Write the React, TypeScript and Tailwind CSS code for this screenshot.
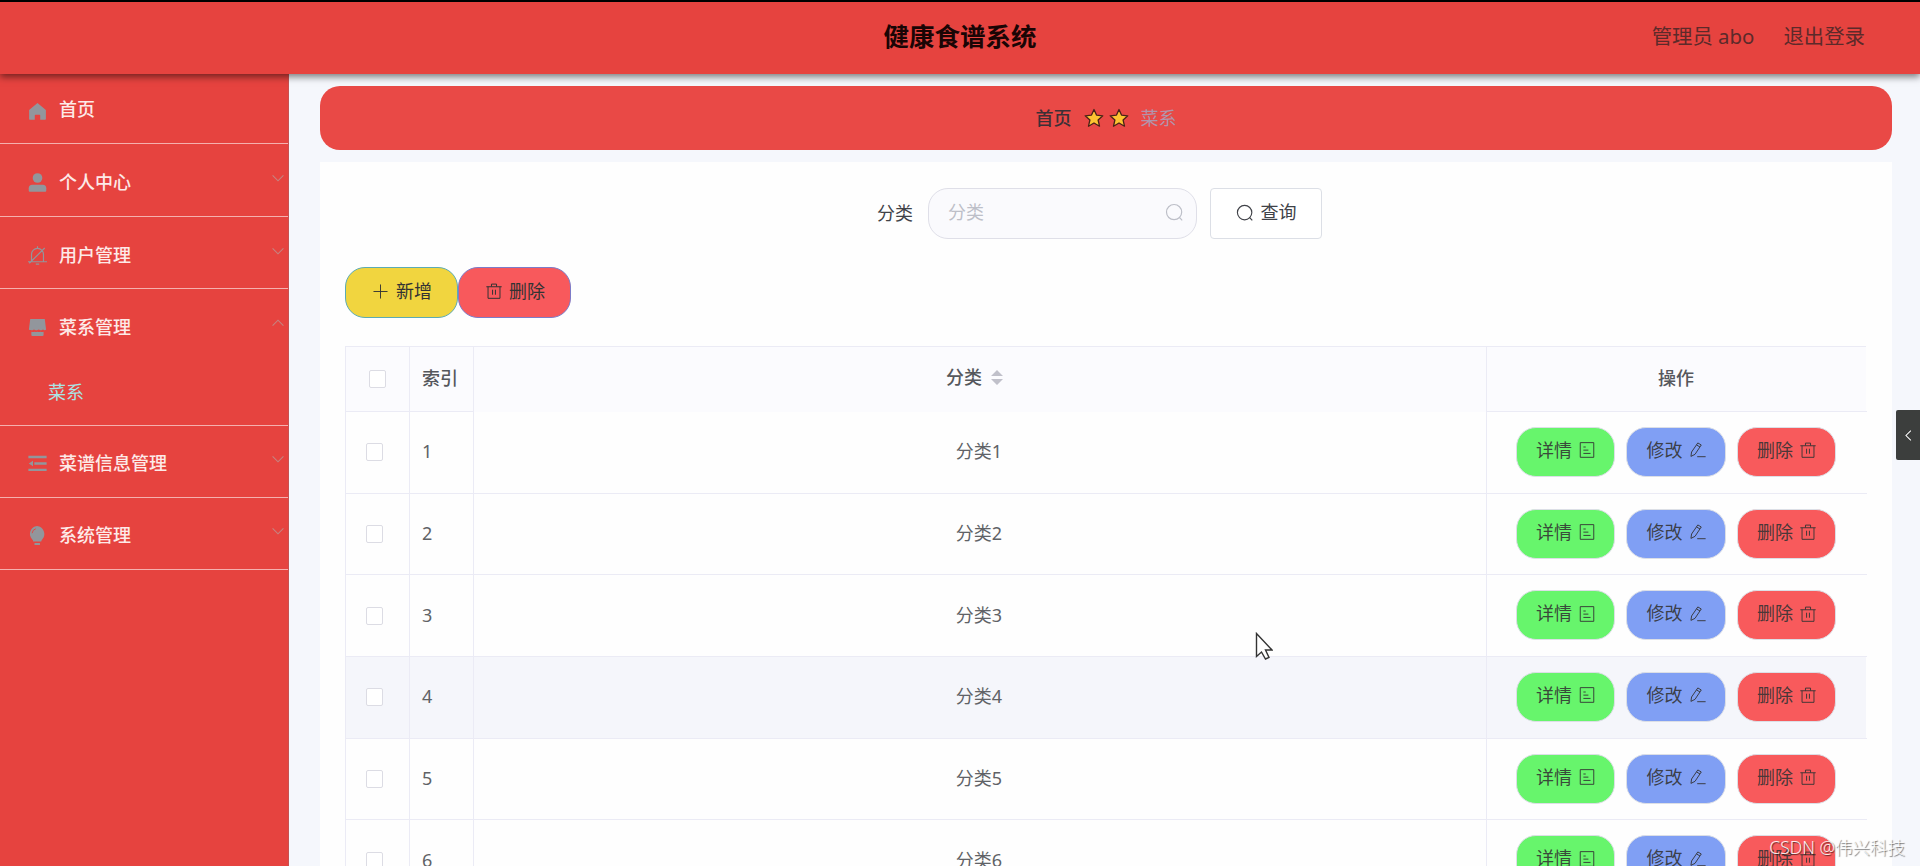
import type { ReactNode, SVGProps } from 'react'

type IconProps = SVGProps<SVGSVGElement>

function Icon({ children, ...rest }: IconProps) {
  return (
    <svg viewBox="0 0 1024 1024" fill="currentColor" aria-hidden="true" {...rest}>
      {children}
    </svg>
  )
}

/** Contour icons share one thin stroke on the same 1024 grid. */
function LineIcon({ children, ...rest }: IconProps) {
  return (
    <Icon fill="none" stroke="currentColor" strokeWidth={64} {...rest}>
      {children}
    </Icon>
  )
}

const HomeIcon = (p: IconProps) => (
  <Icon {...p}>
    <path d="M512 60 60 430v490q0 40 40 40h266V730q0-40 40-40h212q40 0 40 40v230h266q40 0 40-40V430z" />
  </Icon>
)

const UserIcon = (p: IconProps) => (
  <Icon {...p}>
    <circle cx="512" cy="270" r="260" />
    <path d="M230 630h564q190 0 190 190v130q0 54-54 54H94q-54 0-54-54V820q0-190 190-190z" />
  </Icon>
)

const BellOffIcon = (p: IconProps) => (
  <LineIcon {...p}>
    <path d="M0 850h1024M190 850V450a322 322 0 0 1 644 0v400M512 20v108M420 980h184M70 930 900 110" />
  </LineIcon>
)

const StorageIcon = (p: IconProps) => (
  <Icon {...p}>
    <path d="M120 50h784l70 570q-40 60-110 20-60-40-110 0-60 40-110 0-60-40-132 0-60 40-132 0-60-40-110 0-60 40-110 0-60 30-110-20z" />
    <path d="M180 740q90 40 170 0 80 40 160 0 80 40 160 0 80 40 170 0v170q0 60-60 60H240q-60 0-60-60z" />
  </Icon>
)

const FoldIcon = (p: IconProps) => (
  <Icon {...p}>
    <path d="M20 100h984v130H20zM340 445h664v130H340zM20 790h984v130H20zM270 360v304L40 512z" />
  </Icon>
)

const BulbIcon = (p: IconProps) => (
  <Icon {...p}>
    <path d="M280 840q0-60-60-120A430 430 0 0 1 492 0a430 430 0 0 1 290 700q-70 80-70 140zM350 920h294v104H350z" />
    <path d="M220 390q20-190 200-240" fill="none" stroke="#e6433f" strokeWidth={50} />
  </Icon>
)

const SearchIcon = (p: IconProps) => (
  <LineIcon {...p}>
    <circle cx="490" cy="490" r="410" />
    <path d="m765 765 160 170" />
  </LineIcon>
)

const PlusIcon = (p: IconProps) => (
  <LineIcon {...p}>
    <path d="M512 32v960M32 512h960" />
  </LineIcon>
)

const TrashIcon = (p: IconProps) => (
  <LineIcon {...p}>
    <path d="M20 240h984M130 240v740h764V240M350 230V70h324v160M420 430v320M604 430v320" />
  </LineIcon>
)

const DocIcon = (p: IconProps) => (
  <LineIcon {...p}>
    <path d="M80 40h864v940H80zM280 320h150M280 520h320M280 730h460" />
  </LineIcon>
)

const EditIcon = (p: IconProps) => (
  <LineIcon {...p}>
    <path d="M60 920 100 640 500 60l220 130-400 600zM420 190l220 130M460 940h540" />
  </LineIcon>
)

const Chevron = (p: IconProps) => (
  <LineIcon strokeWidth={96} {...p}>
    <path d="m50 290 462 460 462-460" />
  </LineIcon>
)

const Star = () => (
  <svg viewBox="0 0 20 20" className="h-5 w-5" aria-hidden="true">
    <path
      d="m10 1.5 2.500 5.600 6.300.7-4.700 4.200 1.400 6.200L10 15l-5.500 3.200 1.400-6.200-4.700-4.200 6.300-.7z"
      fill="#fdc431"
      stroke="#4a2218"
      strokeWidth="1.300"
      strokeLinejoin="round"
    />
  </svg>
)

type MenuItem = {
  label: string
  Icon: (p: IconProps) => ReactNode
  size: string
  child?: string
  leaf?: boolean
}

const MENU: MenuItem[] = [
  { label: '首页', Icon: HomeIcon, size: 'h-[70px] pb-[11px]', leaf: true },
  { label: '个人中心', Icon: UserIcon, size: 'h-[73px] pt-px' },
  { label: '用户管理', Icon: BellOffIcon, size: 'h-[72px] pt-px' },
  { label: '菜系管理', Icon: StorageIcon, size: 'h-[137px] pt-px', child: '菜系' },
  { label: '菜谱信息管理', Icon: FoldIcon, size: 'h-[72px]' },
  { label: '系统管理', Icon: BulbIcon, size: 'h-[72px]' },
]

const ROWS = [1, 2, 3, 4, 5, 6]
const HOVERED = 4

const COLS = 'grid grid-cols-[64px_64px_1013px_380px]'

function Sidebar() {
  return (
    <aside className="w-[289px] shrink-0 border-r border-[#c75150] bg-[#e6433f]">
      {MENU.map(({ label, Icon: Glyph, size, child, leaf }) => (
        <div key={label} className={`border-b border-[#f5b0ae] ${size}`}>
          <div className={`flex items-center pl-7 pr-1 ${leaf ? 'h-[70px]' : 'h-[75px]'}`}>
            <Glyph className={`h-[19px] w-[19px] shrink-0 text-[#92969c] ${leaf ? 'mt-1' : ''}`} />
            <span className="ml-3 flex-1 text-[18px] font-medium text-[#fdeae8]">{label}</span>
            {leaf ? null : (
              <Chevron className={`mb-[9px] h-3 w-3 text-[#c58380] ${child ? 'rotate-180' : ''}`} />
            )}
          </div>
          {child ? <div className="pl-12 pt-[13px] text-[18px] leading-7 text-[#a9e5e6]">{child}</div> : null}
        </div>
      ))}
    </aside>
  )
}

function Checkbox() {
  return <span className="h-[18px] w-[17px] rounded-[2px] border border-[#dcdce4] bg-white" />
}

function ActionButton({ label, tone, children }: { label: string; tone: string; children: ReactNode }) {
  return (
    <button
      type="button"
      className={`flex h-[50px] items-center justify-center gap-[7px] rounded-[20px] border border-[#dcdfe6] pb-[3px] text-[18px] text-[#333]/90 ${tone}`}
    >
      {label}
      {children}
    </button>
  )
}

function Row({ n }: { n: number }) {
  return (
    <div className={`${COLS} h-[81.700px] text-[18px] text-[#606266] ${n === HOVERED ? 'bg-[#f5f6fb]' : ''}`}>
      <div className="flex items-center border-b border-r border-[#ebebf5] pl-5">
        <Checkbox />
      </div>
      <div className="flex items-center border-b border-r border-[#ebebf5] pb-px pl-3">{n}</div>
      <div className="flex items-center justify-center border-b border-r border-[#ebebf5] pb-px pr-[2px]">
        分类{n}
      </div>
      <div className="flex items-center gap-[11px] border-b border-[#ebebf5] pb-px pl-[29px]">
        <ActionButton label="详情" tone="w-[99px] bg-[#67f56c]">
          <DocIcon className="h-4 w-4" />
        </ActionButton>
        <ActionButton label="修改" tone="w-[100px] bg-[#809ff4]">
          <EditIcon className="h-4 w-4" />
        </ActionButton>
        <ActionButton label="删除" tone="w-[99px] bg-[#f85a5c]">
          <TrashIcon className="h-4 w-4" />
        </ActionButton>
      </div>
    </div>
  )
}

function DataTable() {
  return (
    <div className="mt-[28px] w-[1521px] border-l border-t border-[#ebebf5]">
      <div className={`${COLS} h-[65px] bg-[#fbfbfe] text-[18px] font-medium text-[#55575c]`}>
        <div className="flex items-center justify-center border-b border-r border-[#ebebf5]">
          <Checkbox />
        </div>
        <div className="flex items-center border-b border-r border-[#ebebf5] pb-px pl-3">索引</div>
        <div className="flex items-center justify-center gap-[9px] border-r border-[#ebebf5] pb-[4px] pr-[11px]">
          分类
          <svg viewBox="0 0 12 15" className="h-[15px] w-3 text-[#c0c0ca]" fill="currentColor" aria-hidden="true">
            <path d="M6 0l6 6H0zM0 9h12l-6 6z" />
          </svg>
        </div>
        <div className="flex items-center justify-center border-b border-[#ebebf5] pb-px pr-[2px]">操作</div>
      </div>
      {ROWS.map((n) => (
        <Row key={n} n={n} />
      ))}
    </div>
  )
}

export default function App() {
  return (
    <div className="relative flex h-[866px] w-[1920px] flex-col overflow-hidden border-t-2 border-black bg-[#f5f7fc] font-['Noto_Sans','Noto_Sans_CJK_SC',sans-serif]">
      <header className="z-10 grid h-[72px] shrink-0 grid-cols-3 items-center bg-[#e6433f] pb-[3px] shadow-[0_3px_7px_rgba(0,0,0,0.500)]">
        <span />
        <h1 className="text-center text-[25.500px] font-bold text-[#1a0505]">健康食谱系统</h1>
        <div className="flex justify-end gap-[29px] pr-[55px] text-[20.400px] text-[#5c2a2a]">
          <span>管理员 abo</span>
          <span>退出登录</span>
        </div>
      </header>

      <div className="flex min-h-0 flex-1">
        <Sidebar />

        <main className="flex min-w-0 flex-1 flex-col pl-[31px] pr-7 pt-3">
          <nav className="flex h-[64px] shrink-0 items-center justify-center rounded-[20px] bg-[#e94946] text-[18px]">
            <span className="font-medium text-[#3b3036]">首页</span>
            <span className="mx-[12px] flex gap-[5px]">
              <Star />
              <Star />
            </span>
            <span className="text-[#b295ac]">菜系</span>
          </nav>

          <section className="mt-3 min-h-0 flex-1 overflow-hidden bg-[#fefefe] pl-[25px] pt-[26px]">
            <div className="flex items-center pl-[532px] text-[18px]">
              <label className="text-[#404248]">分类</label>
              <div className="ml-[15px] flex h-[51px] w-[269px] items-center justify-between rounded-[20px] border border-[#dfdfe8] bg-[#fafafd] pb-[2px] pl-[19px] pr-[12px] text-[#bdbfc8]">
                分类
                <SearchIcon className="h-[19px] w-[19px]" />
              </div>
              <button
                type="button"
                className="ml-[13px] flex h-[51px] w-[112px] items-center justify-center gap-[7px] rounded-[4px] border border-[#dcdfe6] bg-white pb-[2px] text-[#404248]"
              >
                <SearchIcon className="h-[18px] w-[18px]" />
                查询
              </button>
            </div>

            <div className="mt-[28px] flex text-[18px] text-[#333]">
              <button
                type="button"
                className="flex h-[51px] w-[113px] items-center justify-center gap-2 rounded-[20px] border border-[#5cabb4] bg-[#f1d53f] pb-[3px] pl-[2px]"
              >
                <PlusIcon className="h-[15px] w-[15px]" />
                新增
              </button>
              <button
                type="button"
                className="flex h-[51px] w-[113px] items-center justify-center gap-[7px] rounded-[20px] border border-[#7d7cc8] bg-[#f8595c] pb-[3px] pl-[2px]"
              >
                <TrashIcon className="h-4 w-4" />
                删除
              </button>
            </div>

            <DataTable />
          </section>
        </main>
      </div>

      <div className="absolute right-0 top-[408px] flex h-[50px] w-6 items-center justify-center rounded-l-[2px] bg-[#3c3e3d] text-white">
        <Chevron className="h-[11px] w-[11px] rotate-90" />
      </div>

      {/* mouse pointer */}
      <svg viewBox="0 0 18 28" className="absolute left-[1255px] top-[630px] h-7 w-[18px]" aria-hidden="true">
        <path
          d="M1.500 1.500v23l5-4.500 4 7 3.500-1.500-3.500-7.500h6.500z"
          fill="#fff"
          stroke="#333"
          strokeWidth="1.400"
        />
      </svg>

      <span className="absolute bottom-[5px] right-[15px] whitespace-nowrap text-[17.500px] font-light leading-7 text-white/90 [text-shadow:1px_1px_1px_rgba(0,0,0,0.600)]">
        CSDN @伟兴科技
      </span>
    </div>
  )
}
